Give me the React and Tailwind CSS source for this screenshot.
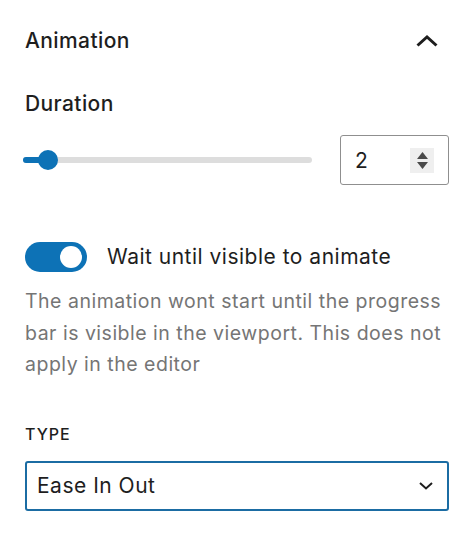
import React from "react";

export default function App() {
  return (
    <div
      className="w-[474px] h-[540px] bg-white px-[25px] flex flex-col text-[#1e1e1e]"
      style={{ fontFamily: "Inter, 'Noto Sans', sans-serif" }}
    >
      <div className="mt-[27px] h-[28px] flex items-center justify-between pr-[10px]">
        <span className="text-[21px] font-medium leading-[28px] tracking-[0.4px]">Animation</span>
        <svg width="24" height="14" viewBox="0 0 24 14" fill="none">
          <path d="M2.5 11.5 L12 3 L21.5 11.5" stroke="#1e1e1e" strokeWidth="3" strokeLinecap="butt" strokeLinejoin="miter" />
        </svg>
      </div>

      <div className="mt-[35px] h-[28px] flex items-center">
        <span className="text-[21px] font-medium leading-[28px] tracking-[0.4px]">Duration</span>
      </div>

      <div className="mt-[17px] h-[50px] flex items-center justify-between">
        <div className="relative w-[289px] h-[20px] ml-[-2px] flex items-center">
          <div className="w-full h-[6px] rounded-full bg-[#dddddd]" />
          <div className="absolute left-0 top-[7px] w-[26px] h-[6px] rounded-full bg-[#0d72b6]" />
          <div className="absolute left-[15px] top-0 w-[20px] h-[20px] rounded-full bg-[#0d72b6]" />
        </div>
        <div className="w-[109px] h-[50px] border border-[#8f8f8f] rounded-[3px] flex items-center justify-between pl-[14px] pr-[14px]">
          <span className="text-[21px] leading-none">2</span>
          <div className="w-[24px] h-[25px] bg-[#efefef] flex flex-col items-center justify-center gap-[3px]">
            <svg width="11" height="7" viewBox="0 0 11 7"><path d="M5.5 0 L11 7 L0 7 Z" fill="#4a4a4a" /></svg>
            <svg width="11" height="7" viewBox="0 0 11 7"><path d="M0 0 L11 0 L5.5 7 Z" fill="#4a4a4a" /></svg>
          </div>
        </div>
      </div>

      <div className="mt-[57px] h-[30px] flex items-center gap-[20px]">
        <div className="relative w-[62px] h-[30px] rounded-full bg-[#0d72b6]">
          <div className="absolute right-[5px] top-[4px] w-[22px] h-[22px] rounded-full bg-white" />
        </div>
        <span className="text-[21px] leading-[28px] tracking-[0.5px]">Wait until visible to animate</span>
      </div>

      <p className="mt-[14px] text-[19.5px] leading-[31.5px] tracking-[0.5px] text-[#757575]">
        The animation wont start until the progress
        <br />
        bar is visible in the viewport. This does not
        <br />
        apply in the editor
      </p>

      <div className="mt-[43px] h-[20px] flex items-center">
        <span className="text-[16px] font-medium leading-[20px] uppercase tracking-[1px]">Type</span>
      </div>

      <div className="mt-[17px] h-[50px] border-2 border-[#1b6ca3] rounded-[3px] flex items-center justify-between pl-[10px] pr-[14px]">
        <span className="text-[21px] leading-none tracking-[0.5px]">Ease In Out</span>
        <svg width="14" height="8" viewBox="0 0 14 8" fill="none">
          <path d="M1 1 L7 6.5 L13 1" stroke="#1e1e1e" strokeWidth="2" />
        </svg>
      </div>
    </div>
  );
}
